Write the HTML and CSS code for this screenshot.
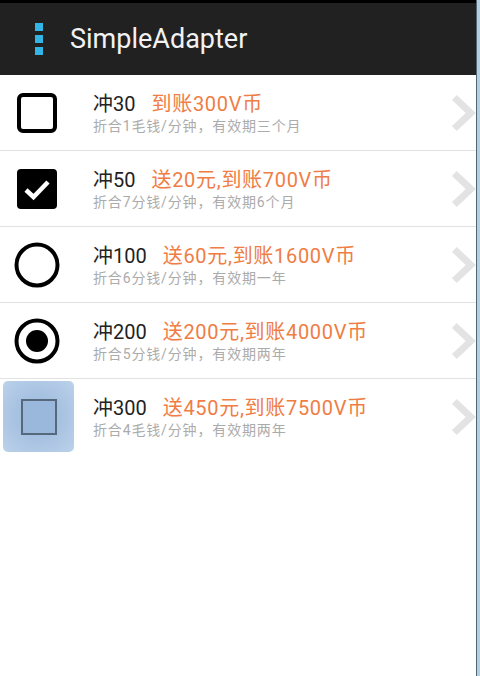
FILE: index.html
```html
<!DOCTYPE html>
<html lang="zh">
<head>
    <meta charset="UTF-8">
    <title>SimpleAdapter</title>
    <link rel="stylesheet" href="styles.css">
</head>
<body>
<div class="screen">
    <div class="status"></div>
    <div class="actionbar">
        <div class="menu-dots"><span></span><span></span><span></span></div>
        <div class="app-title">SimpleAdapter</div>
    </div>

    <ul class="list">
        <li class="item">
            <div class="icon">
                <svg width="42" height="42" viewBox="0 0 42 42"><rect x="3" y="3" width="36" height="36" rx="4" fill="#fff" stroke="#000" stroke-width="4"/></svg>
            </div>
            <div class="text">
                <div class="title">冲30<span class="bonus">到账300V币</span></div>
                <div class="desc">折合1毛钱/分钟，有效期三个月</div>
            </div>
            <div class="arrow"><svg width="30" height="42" viewBox="0 0 30 42"><path d="M5 3 L24 21 L5 39" fill="none" stroke="#e3e3e3" stroke-width="8"/></svg></div>
        </li>
        <li class="item">
            <div class="icon">
                <svg width="42" height="42" viewBox="0 0 42 42"><rect x="1" y="1" width="40" height="40" rx="4" fill="#000"/><path d="M10 22 L17.5 29 L32 14" fill="none" stroke="#fff" stroke-width="4.5"/></svg>
            </div>
            <div class="text">
                <div class="title">冲50<span class="bonus">送20元,到账700V币</span></div>
                <div class="desc">折合7分钱/分钟，有效期6个月</div>
            </div>
            <div class="arrow"><svg width="30" height="42" viewBox="0 0 30 42"><path d="M5 3 L24 21 L5 39" fill="none" stroke="#e3e3e3" stroke-width="8"/></svg></div>
        </li>
        <li class="item">
            <div class="icon">
                <svg width="48" height="48" viewBox="0 0 48 48"><circle cx="24" cy="24" r="20.5" fill="#fff" stroke="#000" stroke-width="4"/></svg>
            </div>
            <div class="text">
                <div class="title">冲100<span class="bonus">送60元,到账1600V币</span></div>
                <div class="desc">折合6分钱/分钟，有效期一年</div>
            </div>
            <div class="arrow"><svg width="30" height="42" viewBox="0 0 30 42"><path d="M5 3 L24 21 L5 39" fill="none" stroke="#e3e3e3" stroke-width="8"/></svg></div>
        </li>
        <li class="item">
            <div class="icon">
                <svg width="48" height="48" viewBox="0 0 48 48"><circle cx="24" cy="24" r="20.5" fill="#fff" stroke="#000" stroke-width="4"/><circle cx="24" cy="24" r="11" fill="#000"/></svg>
            </div>
            <div class="text">
                <div class="title">冲200<span class="bonus">送200元,到账4000V币</span></div>
                <div class="desc">折合5分钱/分钟，有效期两年</div>
            </div>
            <div class="arrow"><svg width="30" height="42" viewBox="0 0 30 42"><path d="M5 3 L24 21 L5 39" fill="none" stroke="#e3e3e3" stroke-width="8"/></svg></div>
        </li>
        <li class="item">
            <div class="icon">
                <div class="pressed">
                    <svg width="36" height="36" viewBox="0 0 36 36"><rect x="1" y="1" width="34" height="34" fill="#9ab8dc" stroke="#56697c" stroke-width="2"/></svg>
                </div>
            </div>
            <div class="text">
                <div class="title">冲300<span class="bonus">送450元,到账7500V币</span></div>
                <div class="desc">折合4毛钱/分钟，有效期两年</div>
            </div>
            <div class="arrow"><svg width="30" height="42" viewBox="0 0 30 42"><path d="M5 3 L24 21 L5 39" fill="none" stroke="#e3e3e3" stroke-width="8"/></svg></div>
        </li>
    </ul>
</div>
</body>
</html>
```

FILE: styles.css
```css
body {
    margin: 0;
    background-color: #b4d0e0;
    font-family: Roboto, "Noto Sans CJK SC", sans-serif;
}
.screen {
    width: 476px;
    height: 676px;
    background-color: #fff;
    border-right: 1px solid #4d6776;
    overflow: hidden;
}
.status {
    height: 3px;
    background-color: #000;
}
.actionbar {
    height: 72px;
    background-color: #212121;
    display: flex;
    align-items: center;
}
.menu-dots {
    width: 8px;
    margin-left: 35px;
    display: flex;
    flex-direction: column;
    gap: 4px;
}
.menu-dots span {
    display: block;
    width: 8px;
    height: 8px;
    background-color: #33b5e5;
}
.app-title {
    margin-left: 27px;
    color: #f2f2f2;
    font-size: 27px;
}
.list {
    list-style: none;
    margin: 0;
    padding: 0;
}
.item {
    height: 75px;
    border-bottom: 1px solid #e2e2e2;
    display: flex;
    align-items: center;
}
.item:last-child {
    border-bottom: none;
}
.icon {
    width: 74px;
    display: flex;
    justify-content: center;
    align-items: center;
}
.icon svg {
    display: block;
}
.pressed {
    width: 71px;
    height: 71px;
    margin-left: 3px;
    border-radius: 5px;
    background: radial-gradient(circle, #97b6db 0%, #a9c3e2 50%, #bcd2ea 100%);
    display: flex;
    justify-content: center;
    align-items: center;
}
.text {
    flex: 1;
    margin-left: 19px;
}
.title {
    font-size: 20px;
    line-height: 26px;
    color: #222;
}
.bonus {
    margin-left: 16px;
    color: #ef7d44;
    letter-spacing: 0.7px;
}
.desc {
    font-size: 14px;
    line-height: 18px;
    color: #ababab;
    letter-spacing: 0.85px;
}
.arrow {
    width: 26px;
    display: flex;
    align-items: center;
    overflow: hidden;
}
```
